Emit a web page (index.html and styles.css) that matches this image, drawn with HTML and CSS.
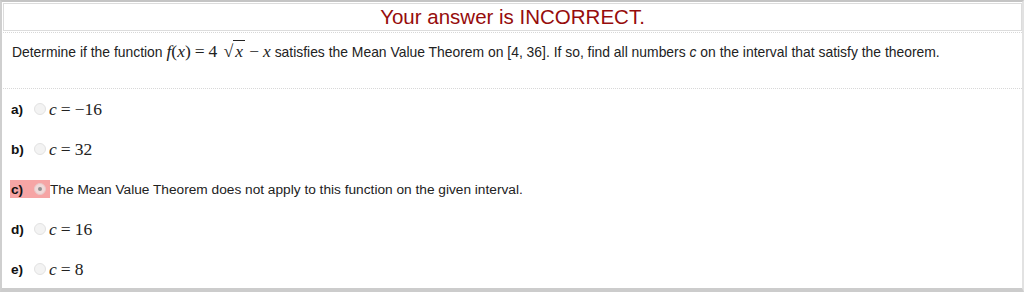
FILE: index.html
```html
<!DOCTYPE html>
<html lang="en">
<head>
    <meta charset="UTF-8" />
    <title>Question</title>
    <link rel="stylesheet" href="styles.css">
</head>
<body>
    <div class="frame">
        <div class="result">Your answer is INCORRECT.</div>

        <div class="question">
            Determine if the function
            <span class="math"><i>f</i>(<i>x</i>)<span class="op">=</span>4 <span class="sqrt">&radic;<span class="rad"><i>x</i></span></span><span class="bin">&minus;</span><i>x</i></span>
            satisfies the Mean Value Theorem on [4, 36]. If so, find all numbers <i class="c">c</i> on the interval that satisfy the theorem.
        </div>

        <div class="options">
            <div class="option">
                <span class="letter">a)</span>
                <span class="radio"></span>
                <span class="math"><i>c</i><span class="op">=</span>&minus;16</span>
            </div>
            <div class="option">
                <span class="letter">b)</span>
                <span class="radio"></span>
                <span class="math"><i>c</i><span class="op">=</span>32</span>
            </div>
            <div class="option">
                <span class="picked">
                    <span class="letter">c)</span>
                    <span class="radio checked"></span>
                </span>
                <span class="text">The Mean Value Theorem does not apply to this function on the given interval.</span>
            </div>
            <div class="option">
                <span class="letter">d)</span>
                <span class="radio"></span>
                <span class="math"><i>c</i><span class="op">=</span>16</span>
            </div>
            <div class="option">
                <span class="letter">e)</span>
                <span class="radio"></span>
                <span class="math"><i>c</i><span class="op">=</span>8</span>
            </div>
        </div>
    </div>
</body>
</html>
```

FILE: styles.css
```css
body {
    margin: 0;
    background: #fff;
    font-family: "Liberation Sans", Arial, sans-serif;
    color: #222;
}

.frame {
    width: 1024px;
    height: 292px;
    box-sizing: border-box;
    border-top: 2px solid #c4c4c4;
    border-left: 2px solid #cfcfcf;
    border-right: 2px solid #e2e2e2;
    border-bottom: 4px solid #cccccc;
    padding: 1px 0 0 1px;
    overflow: hidden;
}

.result {
    height: 26px;
    border: 1px solid #dcdcdc;
    text-align: center;
    font-size: 20.5px;
    line-height: 26px;
    color: #960c0c;
}

.question {
    height: 57px;
    margin-top: 1px;
    border-top: 1px dotted #d8d8d8;
    border-bottom: 1px dotted #d8d8d8;
    padding: 8px 0 0 9px;
    box-sizing: border-box;
    font-size: 13.9px;
    line-height: 20px;
}

.math {
    font-family: "Liberation Serif", "Times New Roman", serif;
    font-size: 17.5px;
}

.math i {
    font-style: italic;
}

.op {
    padding: 0 4px;
}

.bin {
    padding: 0 4px;
}

.sqrt {
    display: inline-block;
    font-style: normal;
    margin-left: 2px;
}

.rad {
    border-top: 1px solid #222;
    padding: 0 2px;
}

.c {
    font-style: italic;
}

.options {
    display: flex;
    flex-direction: column;
}

.option {
    height: 40px;
    display: flex;
    align-items: center;
    padding-left: 8px;
    font-size: 13.7px;
}

.letter {
    font-weight: bold;
    width: 23px;
    color: #111;
}

.picked {
    display: flex;
    align-items: center;
    background: #f6a5a5;
    height: 18px;
    padding-left: 1px;
    margin-left: -1px;
    padding-right: 1px;
}

.radio {
    width: 12px;
    height: 12px;
    border-radius: 50%;
    border: 1px solid #e2e2e2;
    background: #f3f3f3;
    margin-right: 3px;
    box-sizing: border-box;
    position: relative;
}

.radio.checked {
    background: #f0dada;
    border-color: #e9c9c9;
}

.radio.checked::after {
    content: "";
    position: absolute;
    left: 3px;
    top: 3px;
    width: 4px;
    height: 4px;
    border-radius: 50%;
    background: #8f8f8f;
}

.text {
    color: #222;
}
```
